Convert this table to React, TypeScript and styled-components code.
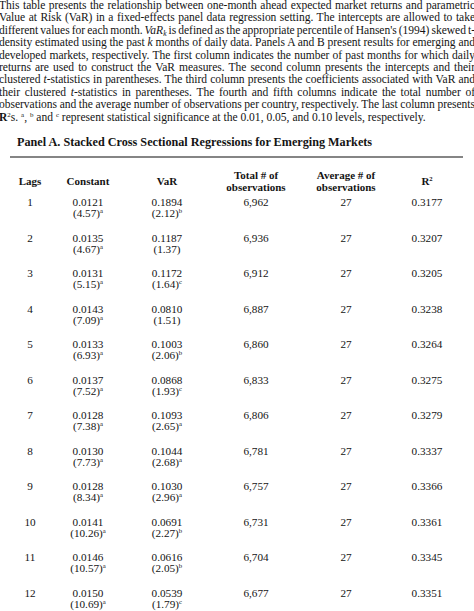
import * as React from 'react'
import styled, { createGlobalStyle } from 'styled-components'

const GlobalStyle = createGlobalStyle`
    html, body {
        margin: 0;
        padding: 0;
        background: #ffffff;
    }
    body {
        font-family: "Liberation Serif", "Times New Roman", serif;
        color: #141414;
        overflow: hidden;
    }
`

const Page = styled.div`
    width: 474px;
    height: 611px;
    overflow: hidden;
`

const Caption = styled.div`
    margin: -1px 0 0 -1px;
    width: 476px;
    font-size: 11.55px;
    line-height: 12.4px;
`

// justified lines get squeezed word gaps, the justify then spreads them back out
const Line = styled.span<{ $last?: boolean }>`
    display: block;
    white-space: nowrap;
    word-spacing: ${props => props.$last ? 'normal' : '-1.3px'};
    letter-spacing: ${props => props.$last ? 'normal' : '-0.03px'};
    text-align: ${props => props.$last ? 'left' : 'justify'};
    text-align-last: ${props => props.$last ? 'left' : 'justify'};
`

const Sup = styled.sup`
    font-size: 0.6em;
    line-height: 0;
    vertical-align: 0.65em;
`

const Sub = styled.sub`
    font-size: 0.65em;
    line-height: 0;
    vertical-align: -0.25em;
`

const PanelTitle = styled.div`
    margin: 12px 0 0 17px;
    font-size: 12.2px;
    line-height: 15px;
    font-weight: bold;
`

const Rule = styled.div`
    margin: 6px 0 0 10px;
    width: 453px;
    height: 2px;
    background: #858585;
`

const Table = styled.div`
    margin: 11px 0 0 10px;
    width: 456px;
    display: grid;
    grid-template-columns: 40px 76px 82px 96px 84px 78px;
    font-size: 11.2px;
`

const HeadCell = styled.div`
    display: flex;
    flex-direction: column;
    justify-content: center;
    align-items: center;
    height: 24px;
    line-height: 12px;
    font-size: 11px;
    font-weight: bold;
    text-align: center;
    margin-bottom: 4px;
`

const Cell = styled.div`
    display: flex;
    flex-direction: column;
    align-items: center;
    line-height: 11px;
    height: 22px;
    padding-bottom: 13.5px;
    text-align: center;
`

const Stat = styled.span`
    white-space: nowrap;
`

type Row = {
    lag: number
    c: string
    ct: string
    cs: string
    v: string
    vt: string
    vs: string
    total: string
    avg: string
    r2: string
}

const rows: Row[] = [
    { lag: 1, c: '0.0121', ct: '(4.57)', cs: 'a', v: '0.1894', vt: '(2.12)', vs: 'b', total: '6,962', avg: '27', r2: '0.3177' },
    { lag: 2, c: '0.0135', ct: '(4.67)', cs: 'a', v: '0.1187', vt: '(1.37)', vs: '', total: '6,936', avg: '27', r2: '0.3207' },
    { lag: 3, c: '0.0131', ct: '(5.15)', cs: 'a', v: '0.1172', vt: '(1.64)', vs: 'c', total: '6,912', avg: '27', r2: '0.3205' },
    { lag: 4, c: '0.0143', ct: '(7.09)', cs: 'a', v: '0.0810', vt: '(1.51)', vs: '', total: '6,887', avg: '27', r2: '0.3238' },
    { lag: 5, c: '0.0133', ct: '(6.93)', cs: 'a', v: '0.1003', vt: '(2.06)', vs: 'b', total: '6,860', avg: '27', r2: '0.3264' },
    { lag: 6, c: '0.0137', ct: '(7.52)', cs: 'a', v: '0.0868', vt: '(1.93)', vs: 'c', total: '6,833', avg: '27', r2: '0.3275' },
    { lag: 7, c: '0.0128', ct: '(7.38)', cs: 'a', v: '0.1093', vt: '(2.65)', vs: 'a', total: '6,806', avg: '27', r2: '0.3279' },
    { lag: 8, c: '0.0130', ct: '(7.73)', cs: 'a', v: '0.1044', vt: '(2.68)', vs: 'a', total: '6,781', avg: '27', r2: '0.3337' },
    { lag: 9, c: '0.0128', ct: '(8.34)', cs: 'a', v: '0.1030', vt: '(2.96)', vs: 'a', total: '6,757', avg: '27', r2: '0.3366' },
    { lag: 10, c: '0.0141', ct: '(10.26)', cs: 'a', v: '0.0691', vt: '(2.27)', vs: 'b', total: '6,731', avg: '27', r2: '0.3361' },
    { lag: 11, c: '0.0146', ct: '(10.57)', cs: 'a', v: '0.0616', vt: '(2.05)', vs: 'b', total: '6,704', avg: '27', r2: '0.3345' },
    { lag: 12, c: '0.0150', ct: '(10.69)', cs: 'a', v: '0.0539', vt: '(1.79)', vs: 'c', total: '6,677', avg: '27', r2: '0.3351' },
]

const TStat = ({ value, sig }: { value: string; sig: string }) => (
    <Stat>
        {value}
        {sig ? <Sup>{sig}</Sup> : null}
    </Stat>
)

export default function App() {
    return (
        <Page>
            <GlobalStyle />
            <Caption>
                <Line>This table presents the relationship between one-month ahead expected market returns and parametric</Line>
                <Line>Value at Risk (VaR) in a fixed-effects panel data regression setting. The intercepts are allowed to take</Line>
                <Line>
                    different values for each month. <i>VaR<Sub>k</Sub></i> is defined as the appropriate percentile of Hansen's (1994) skewed t-
                </Line>
                <Line>
                    density estimated using the past <i>k</i> months of daily data. Panels A and B present results for emerging and
                </Line>
                <Line>developed markets, respectively. The first column indicates the number of past months for which daily</Line>
                <Line>returns are used to construct the VaR measures. The second column presents the intercepts and their</Line>
                <Line>
                    clustered <i>t</i>-statistics in parentheses. The third column presents the coefficients associated with VaR and
                </Line>
                <Line>
                    their clustered <i>t</i>-statistics in parentheses. The fourth and fifth columns indicate the total number of
                </Line>
                <Line>observations and the average number of observations per country, respectively. The last column presents</Line>
                <Line $last>
                    <b>R</b><Sup>2</Sup>s. <Sup>a</Sup>, <Sup>b</Sup> and <Sup>c</Sup> represent statistical significance at the 0.01, 0.05, and 0.10 levels, respectively.
                </Line>
            </Caption>

            <PanelTitle>Panel A. Stacked Cross Sectional Regressions for Emerging Markets</PanelTitle>
            <Rule />

            <Table>
                <HeadCell>Lags</HeadCell>
                <HeadCell>Constant</HeadCell>
                <HeadCell>VaR</HeadCell>
                <HeadCell>
                    <span>Total # of</span>
                    <span>observations</span>
                </HeadCell>
                <HeadCell>
                    <span>Average # of</span>
                    <span>observations</span>
                </HeadCell>
                <HeadCell>
                    <span>R<Sup>2</Sup></span>
                </HeadCell>

                {rows.map(r => (
                    <React.Fragment key={r.lag}>
                        <Cell>{r.lag}</Cell>
                        <Cell>
                            <span>{r.c}</span>
                            <TStat value={r.ct} sig={r.cs} />
                        </Cell>
                        <Cell>
                            <span>{r.v}</span>
                            <TStat value={r.vt} sig={r.vs} />
                        </Cell>
                        <Cell>{r.total}</Cell>
                        <Cell>{r.avg}</Cell>
                        <Cell>{r.r2}</Cell>
                    </React.Fragment>
                ))}
            </Table>
        </Page>
    )
}
